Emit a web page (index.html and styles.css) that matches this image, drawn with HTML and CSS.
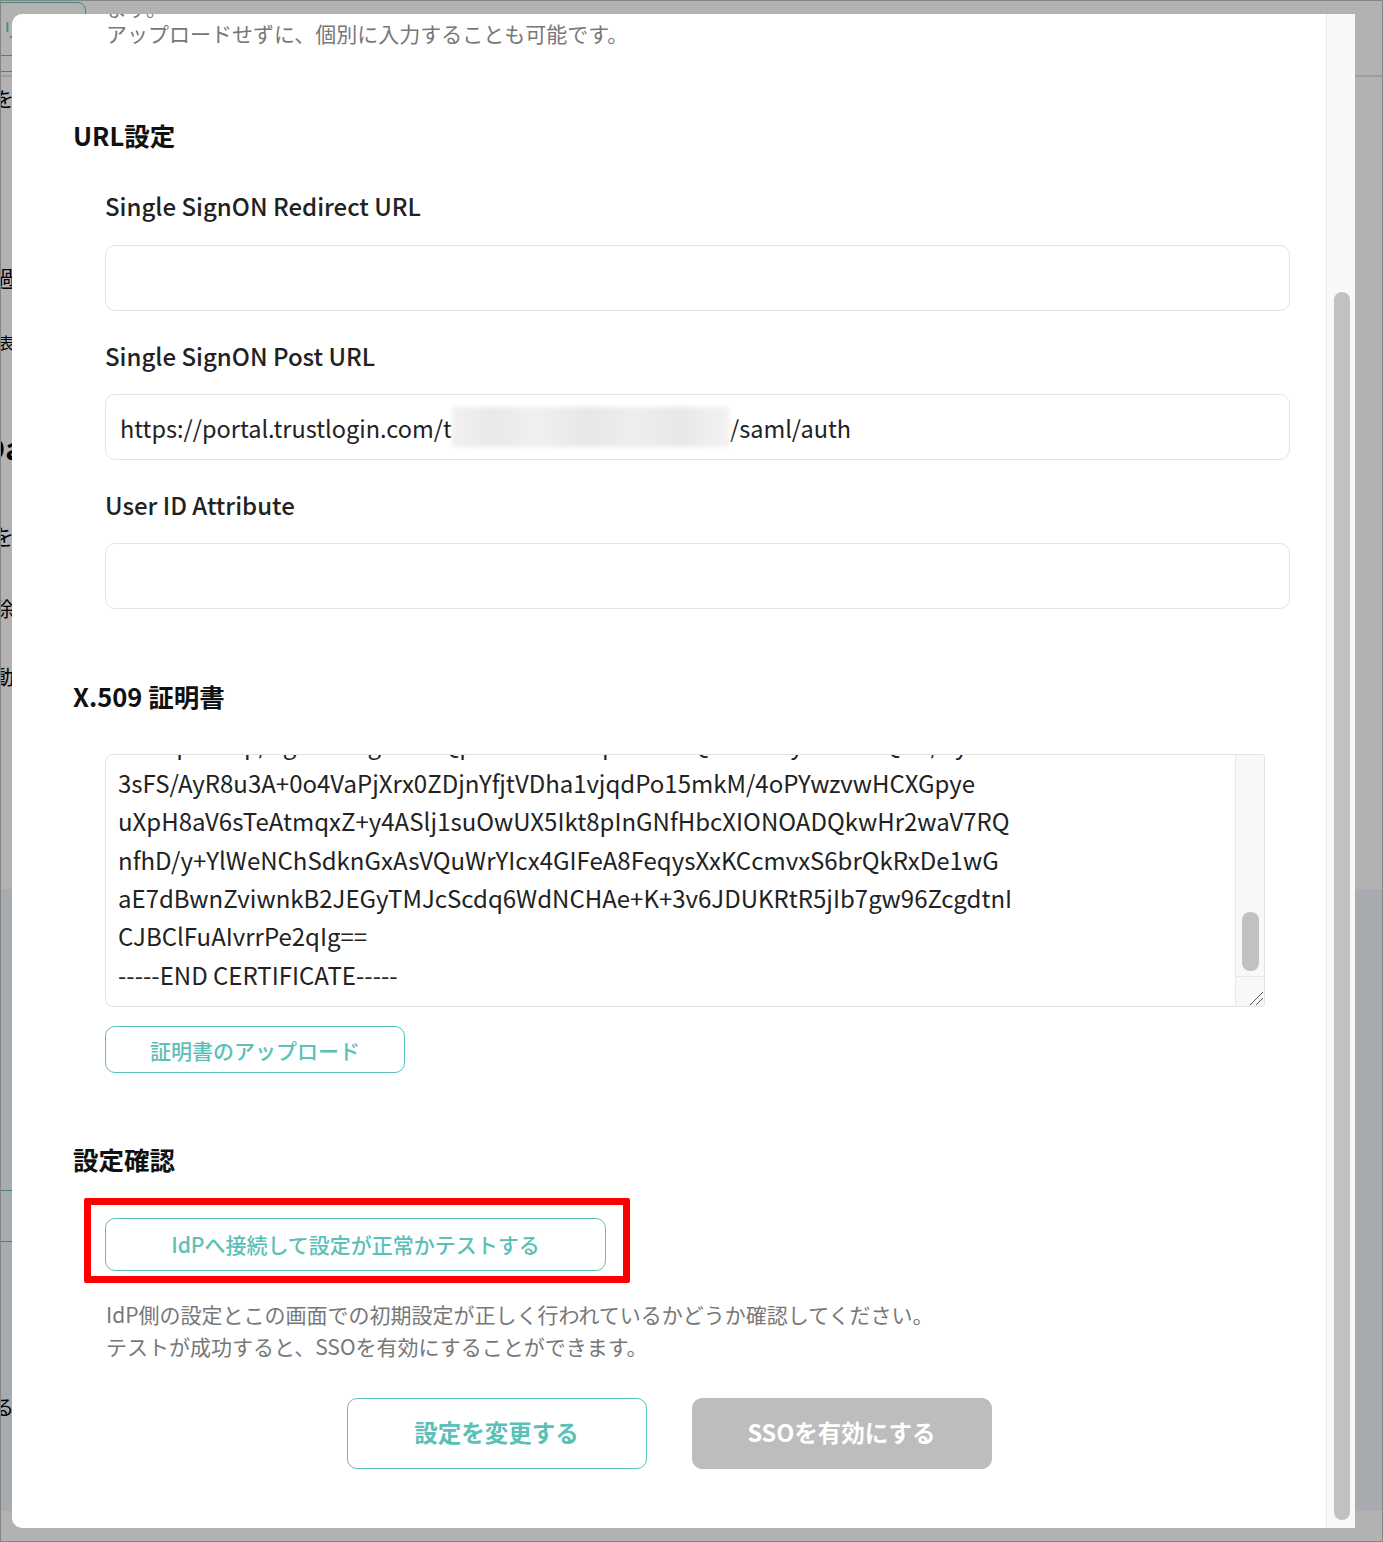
FILE: index.html
```html
<!DOCTYPE html>
<html lang="ja">
<head>
<meta charset="utf-8">
<title>SSO設定</title>
<link rel="stylesheet" href="styles.css">
</head>
<body>
<div class="screen">
  <div class="behind">
    <div class="b-top">
      <div class="b-btn">リンク</div>
    </div>
    <div class="b-rule-teal"></div>
    <div class="b-rule-gray"></div>
    <div class="b-col">
      <div class="bl bl-1">設定を</div>
      <div class="bl bl-2">経過</div>
      <div class="bl bl-3">と表</div>
      <div class="bl bl-4">SSO Da</div>
      <div class="bl bl-5">設定を</div>
      <div class="bl bl-6">削除</div>
      <div class="bl bl-7">自動</div>
    </div>
    <div class="b-band">
      <div class="b-line b-line-1"></div>
      <div class="b-line b-line-2"></div>
      <div class="bl bl-8">する</div>
    </div>
  </div>
  <div class="overlay"></div>
  <div class="modal">
    <div class="modal-body">
      <div class="modal-scroll">
        <p class="intro">ます。<br>アップロードせずに、個別に入力することも可能です。</p>

        <h2 class="sec sec-url">URL設定</h2>
        <div class="fields">
          <div class="field">
            <div class="label">Single SignON Redirect URL</div>
            <div class="input"></div>
          </div>
          <div class="field">
            <div class="label">Single SignON Post URL</div>
            <div class="input"><span>https://portal.trustlogin.com/t</span><span class="blur"></span><span>/saml/auth</span></div>
          </div>
          <div class="field">
            <div class="label">User ID Attribute</div>
            <div class="input"></div>
          </div>
        </div>

        <h2 class="sec sec-cert">X.509 証明書</h2>
        <div class="cert">
          <div class="cert-text">
            <div class="cert-lines">MIIDqDCCAp/CgAwIBAgIGAYzQp8kMA0GCSqGSIb3DQEBCwUyMIGUMQsw/Cy
3sFS/AyR8u3A+0o4VaPjXrx0ZDjnYfjtVDha1vjqdPo15mkM/4oPYwzvwHCXGpye
uXpH8aV6sTeAtmqxZ+y4ASlj1suOwUX5Ikt8pInGNfHbcXIONOADQkwHr2waV7RQ
nfhD/y+YlWeNChSdknGxAsVQuWrYIcx4GIFeA8FeqysXxKCcmvxS6brQkRxDe1wG
aE7dBwnZviwnkB2JEGyTMJcScdq6WdNCHAe+K+3v6JDUKRtR5jIb7gw96ZcgdtnI
CJBClFuAIvrrPe2qIg==
-----END CERTIFICATE-----</div>
          </div>
          <div class="cert-bar">
            <div class="cert-track"><div class="cert-thumb"></div></div>
            <div class="cert-corner">
              <svg width="29" height="30" viewBox="0 0 29 30"><line x1="27" y1="15" x2="14" y2="28" stroke="#555" stroke-width="1"/><line x1="27" y1="21" x2="20" y2="28" stroke="#555" stroke-width="1"/></svg>
            </div>
          </div>
        </div>
        <button class="btn-outline btn-upload">証明書のアップロード</button>

        <h2 class="sec sec-check">設定確認</h2>
        <div class="redbox">
          <button class="btn-outline btn-test">IdPへ接続して設定が正常かテストする</button>
        </div>
        <p class="desc">IdP側の設定とこの画面での初期設定が正しく行われているかどうか確認してください。<br>テストが成功すると、SSOを有効にすることができます。</p>

        <div class="actions">
          <button class="btn-big btn-change">設定を変更する</button>
          <button class="btn-big btn-enable">SSOを有効にする</button>
        </div>
      </div>
    </div>
    <div class="vbar"><div class="vthumb"></div></div>
  </div>
</div>
</body>
</html>
```

FILE: styles.css
```css
* { box-sizing: border-box; }
html, body { margin: 0; padding: 0; }
body {
  font-family: "Noto Sans CJK JP", "Noto Sans", sans-serif;
  background: #fff;
}
.screen {
  position: relative;
  width: 1383px;
  height: 1542px;
  overflow: hidden;
  border: 1px solid #858585;
}

/* page behind the modal */
.behind {
  height: 100%;
  background: #fff;
  display: flex;
  flex-direction: column;
}
.b-top { height: 54px; padding-top: 1px; }
.b-btn {
  width: 185px;
  height: 70px;
  margin-left: -100px;
  border: 1px solid #5bc0b7;
  border-radius: 8px;
  color: #5bc0b7;
  font-size: 20px;
  padding: 12px 0 0 100px;
}
.b-rule-teal { height: 1px; width: 200px; background: #5bc0b7; }
.b-rule-gray { height: 2px; margin-top: 19px; background: #e2e2e2; }
.b-col { display: flex; flex-direction: column; height: 812px; }
.bl {
  width: 13px;
  display: flex;
  justify-content: flex-end;
  white-space: nowrap;
  color: #000;
  font-size: 20px;
  line-height: 20px;
}
.bl-1 { margin-top: 12px; }
.bl-2 { margin-top: 157px; font-size: 22px; line-height: 22px; width: 14px; }
.bl-3 { margin-top: 46px; font-size: 16px; line-height: 16px; }
.bl-4 { margin-top: 82px; font-size: 30px; line-height: 30px; font-weight: 700; width: 22px; }
.bl-5 { margin-top: 62px; font-size: 22px; line-height: 22px; }
.bl-6 { margin-top: 53px; }
.bl-7 { margin-top: 48px; }
.b-band {
  height: 622px;
  background: #f0f4fa;
  display: flex;
  flex-direction: column;
}
.b-line { height: 1px; width: 200px; background: #5bc0b7; }
.b-line-1 { margin-top: 301px; }
.b-line-2 { margin-top: 50px; }
.bl-8 { margin-top: 155px; }

.overlay {
  position: absolute;
  inset: 0;
  background: rgba(0, 0, 0, 0.3);
}

/* modal */
.modal {
  position: absolute;
  left: 11px;
  top: 13px;
  width: 1343px;
  height: 1514px;
  background: #fff;
  border-radius: 10px 0 0 10px;
  display: flex;
  overflow: hidden;
}
.modal-body { flex: 1; overflow: hidden; }
.modal-scroll {
  margin-top: -20px;
  padding: 0 36px 0 61px;
}
.vbar {
  width: 29px;
  border-left: 1px solid #ebebeb;
  background: #f8f8f8;
  padding: 278px 5px 8px 7px;
  display: flex;
  flex-direction: column;
}
.vthumb { flex: 1; background: #c1c1c1; border-radius: 8px; }

.intro, .desc {
  margin: 0;
  padding-left: 33px;
  font-size: 21px;
  color: #777;
}
.intro { line-height: 26px; }
.desc { line-height: 32px; margin-top: 15px; }
.sec {
  margin: 0;
  font-size: 25.5px;
  line-height: 36px;
  font-weight: 700;
  color: #111;
}
.sec-url { margin-top: 71px; }
.sec-cert { margin-top: 69.5px; }
.sec-check { margin-top: 68px; }

.fields {
  margin-top: 38px;
  padding-left: 32px;
  display: flex;
  flex-direction: column;
  gap: 29.5px;
}
.label {
  margin-bottom: 21.5px;
  font-size: 24px;
  line-height: 32px;
  font-weight: 500;
  color: #222;
}
.field:first-child .label { margin-bottom: 22.5px; margin-top: -1px; }
.input {
  height: 66px;
  border: 1px solid #e3e3e3;
  border-radius: 10px;
  padding: 3px 14px 0;
  display: flex;
  align-items: center;
  font-size: 23.5px;
  color: #222;
  white-space: nowrap;
}
.blur {
  width: 278px;
  height: 40px;
  margin-top: -3px;
  background: linear-gradient(90deg, #f1f1f1 0%, #e9e9e9 15%, #f0f0f0 30%, #e7e7e7 50%, #eeeeee 65%, #e8e8e8 82%, #f3f3f3 100%);
  filter: blur(2px);
}

/* certificate textarea */
.cert {
  margin: 40px 0 0 32px;
  width: 1160px;
  height: 253px;
  border: 1px solid #e3e3e3;
  border-radius: 8px 3px 3px 8px;
  display: flex;
  overflow: hidden;
}
.cert-text { flex: 1; overflow: hidden; padding-left: 12px; }
.cert-lines {
  margin-top: -29.6px;
  white-space: pre;
  font-size: 24px;
  line-height: 38.4px;
  color: #222;
}
.cert-bar {
  width: 29px;
  border-left: 1px solid #e8e8e8;
  background: #f8f8f8;
  display: flex;
  flex-direction: column;
}
.cert-track { flex: 1; padding: 157px 5px 0 6px; }
.cert-thumb { height: 59px; background: #c1c1c1; border-radius: 8px; }
.cert-corner { height: 30px; border-top: 1px solid #e8e8e8; }
.cert-corner svg { display: block; }

/* buttons */
button { font-family: inherit; cursor: pointer; }
.btn-outline {
  display: block;
  background: #fff;
  border: 1px solid #5bc0b7;
  border-radius: 10px;
  color: #5bc0b7;
  font-size: 21px;
  font-weight: 500;
  padding: 0;
}
.btn-upload {
  margin: 19px 0 0 32px;
  width: 300px;
  height: 47px;
}
.redbox {
  margin: 21px 0 0 11px;
  width: fit-content;
  border: 7px solid #ff0000;
  border-radius: 2px;
  padding: 13px 17px 5px 14px;
}
.btn-test { width: 501px; height: 53px; padding-bottom: 2px; }

.actions {
  margin: 36px -36px 0 -61px;
  display: flex;
  justify-content: center;
  gap: 45px;
}
.btn-big {
  width: 300px;
  height: 71px;
  border-radius: 10px;
  font-size: 23.5px;
  font-weight: 700;
  padding: 0 0 3px;
}
.btn-change {
  background: #fff;
  border: 1px solid #5bc0b7;
  color: #5bc0b7;
}
.btn-enable {
  background: #bdbdbd;
  border: 1px solid #bdbdbd;
  color: #fff;
}
```
